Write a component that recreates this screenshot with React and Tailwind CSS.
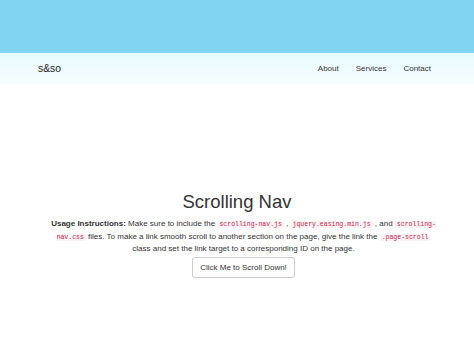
import React from 'react';

function Code({ children }) {
  return (
    <code className="rounded-[2px] bg-[#f9f2f4] px-[2px] text-[6.5px] text-[#c7254e] [font-family:'Liberation_Mono','DejaVu_Sans_Mono',monospace]">
      {children}
    </code>
  );
}

export default function App() {
  return (
    <div className="min-h-[364px] w-full bg-white text-[#333] [font-family:'Liberation_Sans',Arial,sans-serif]">
      {/* top band */}
      <div className="h-[53px] bg-[#82d4f3]" />

      {/* navbar */}
      <nav className="flex h-[31px] items-center justify-between bg-gradient-to-b from-[#e6fafe] to-[#f8feff] pl-[38px] pr-[43px]">
        <span className="text-[10.3px] text-[#222]">s&amp;so</span>
        <ul className="flex gap-[17px] text-[8px] text-[#333]">
          <li>About</li>
          <li>Services</li>
          <li>Contact</li>
        </ul>
      </nav>

      {/* intro */}
      <section className="flex flex-col items-center pt-[106px] text-center">
        <h1 className="text-[18.5px] leading-[24px] text-[#333]">Scrolling Nav</h1>
        <p className="ml-[13px] mt-[4px] w-[393px] text-[8px] leading-[11.5px]">
          <b>Usage Instructions:</b> Make sure to include the <Code>scrolling-nav.js</Code> ,{' '}
          <Code>jquery.easing.min.js</Code> , and <Code>scrolling-nav.css</Code> files. To make a link
          smooth scroll to another section on the page, give the link the <Code>.page-scroll</Code>{' '}
          class and set the link target to a corresponding ID on the page.
        </p>
        <button className="ml-[13px] mt-[2px] rounded-[3px] border border-[#ccc] bg-white px-[7px] py-[4px] text-[8px] leading-[11px] text-[#333]">
          Click Me to Scroll Down!
        </button>
      </section>
    </div>
  );
}
